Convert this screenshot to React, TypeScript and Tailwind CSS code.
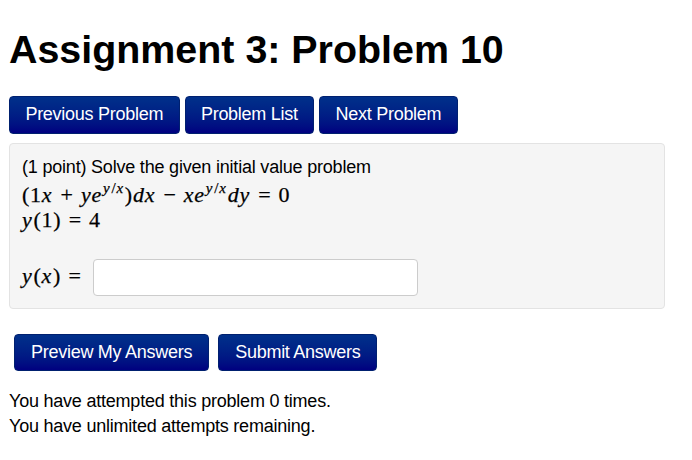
const mathFont = "font-['Liberation_Serif',serif] [-webkit-text-stroke:0.25px_black] text-[22px] tracking-[0.75px] [word-spacing:1px]";

function Btn({ label, short }: { label: string; short?: boolean }) {
  return (
    <button className={`${short ? "h-[37px] px-[16px]" : "h-[38px] px-[15.4px]"} rounded-[4px] border border-[#00206f] bg-gradient-to-b from-[#00308a] to-[#000080] text-white text-[18px] leading-none tracking-[-0.27px] pb-[2px]`}>
      {label}
    </button>
  );
}

function V({ children }: { children: React.ReactNode }) {
  return <i className="pr-[1px]">{children}</i>;
}

function Exp() {
  return (
    <sup className="text-[15px] leading-none top-[-9px] relative align-baseline">
      <V>y</V>/<V>x</V>
    </sup>
  );
}

export default function App() {
  return (
    <div className="w-[692px] h-[460px] bg-white text-black font-['Liberation_Sans',sans-serif] overflow-hidden px-[9px]">
      <h1 className="pt-[26px] text-[39.4px] leading-[46px] font-bold">Assignment 3: Problem 10</h1>
      <div className="flex gap-[5px] mt-[24px]">
        <Btn label="Previous Problem" />
        <Btn label="Problem List" />
        <Btn label="Next Problem" />
      </div>
      <div className="w-[656px] h-[166px] mt-[9px] px-[12px] pt-[11px] bg-[#f5f5f5] border border-[#e3e3e3] rounded-[4px] text-[18px] leading-[24px]">
        <div className="tracking-[-0.2px]">(1 point) Solve the given initial value problem</div>
        <div className={`${mathFont} leading-[28px] h-[28px] mt-[2px]`}>
          (1<V>x</V> + <V>ye</V><Exp />)<V>dx</V> − <V>xe</V><Exp /><V>dy</V> = 0
        </div>
        <div className={`${mathFont} leading-[24px] -mt-[1px]`}>
          <V>y</V>(1) = 4
        </div>
        <div className="flex items-center gap-[11px] mt-[27px]">
          <span className={`${mathFont} w-[60px] whitespace-nowrap pb-[3px]`}><V>y</V>(<V>x</V>) =</span>
          <input className="w-[325px] h-[37px] bg-white border border-[#cccccc] rounded-[4px]" />
        </div>
      </div>
      <div className="flex gap-[9px] mt-[25px] ml-[5px]">
        <Btn label="Preview My Answers" short />
        <Btn label="Submit Answers" short />
      </div>
      <div className="mt-[18px] text-[18px] leading-[25px] tracking-[-0.22px]">
        <div>You have attempted this problem 0 times.</div>
        <div>You have unlimited attempts remaining.</div>
      </div>
    </div>
  );
}
